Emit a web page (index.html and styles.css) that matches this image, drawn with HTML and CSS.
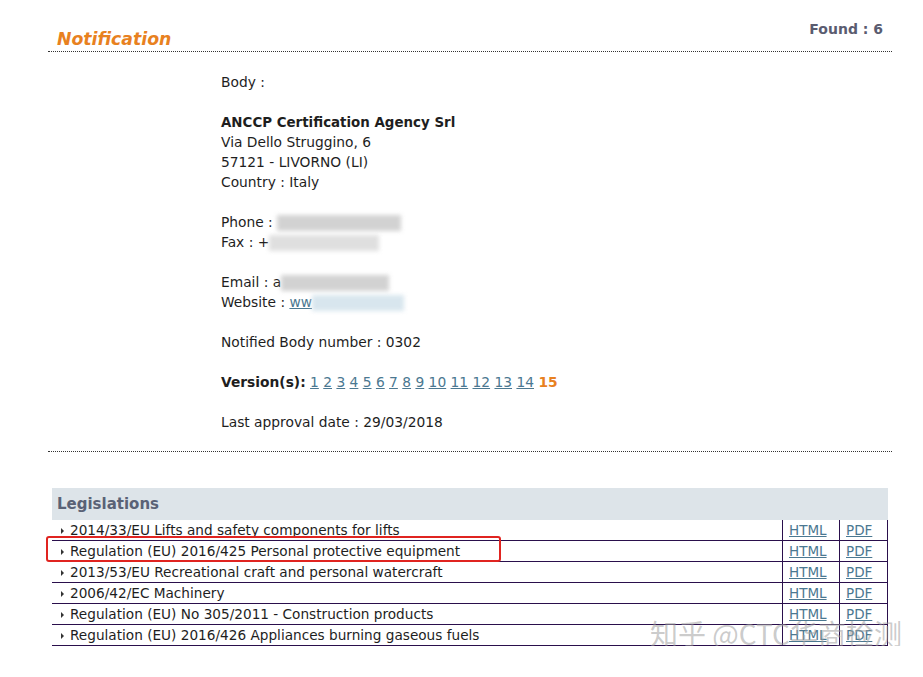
FILE: index.html
```html
<!DOCTYPE html>
<html>
<head>
<meta charset="utf-8">
<link rel="stylesheet" href="styles.css">
</head>
<body>
<div class="page">
  <div class="header">
    <h1 class="title">Notification</h1>
    <div class="found">Found : 6</div>
  </div>
  <div class="details">
    <div class="line">Body :</div>
    <div class="group">
      <div class="line"><b class="org">ANCCP Certification Agency Srl</b></div>
      <div class="line">Via Dello Struggino, 6</div>
      <div class="line">57121 - LIVORNO (LI)</div>
      <div class="line">Country : Italy</div>
    </div>
    <div class="group">
      <div class="line">Phone : <span class="blur w1"></span></div>
      <div class="line">Fax : +<span class="blur w2"></span></div>
    </div>
    <div class="group">
      <div class="line">Email : a<span class="blur w3"></span></div>
      <div class="line">Website : <a href="#">ww<span class="blur w4"></span></a></div>
    </div>
    <div class="group">
      <div class="line">Notified Body number : 0302</div>
    </div>
    <div class="group">
      <div class="line"><b>Version(s):</b> <a href="#">1</a> <a href="#">2</a> <a href="#">3</a> <a href="#">4</a> <a href="#">5</a> <a href="#">6</a> <a href="#">7</a> <a href="#">8</a> <a href="#">9</a> <a href="#">10</a> <a href="#">11</a> <a href="#">12</a> <a href="#">13</a> <a href="#">14</a> <b class="current">15</b></div>
    </div>
    <div class="group">
      <div class="line">Last approval date : 29/03/2018</div>
    </div>
  </div>
  <div class="legis">
    <div class="legis-head">Legislations</div>
    <table class="legis-table">
      <tr><td class="name"><span class="arrow"></span>2014/33/EU Lifts and safety components for lifts</td><td class="lnk"><a href="#">HTML</a></td><td class="lnk pdf"><a href="#">PDF</a></td></tr>
      <tr><td class="name"><span class="arrow"></span>Regulation (EU) 2016/425 Personal protective equipment</td><td class="lnk"><a href="#">HTML</a></td><td class="lnk pdf"><a href="#">PDF</a></td></tr>
      <tr><td class="name"><span class="arrow"></span>2013/53/EU Recreational craft and personal watercraft</td><td class="lnk"><a href="#">HTML</a></td><td class="lnk pdf"><a href="#">PDF</a></td></tr>
      <tr><td class="name"><span class="arrow"></span>2006/42/EC Machinery</td><td class="lnk"><a href="#">HTML</a></td><td class="lnk pdf"><a href="#">PDF</a></td></tr>
      <tr><td class="name"><span class="arrow"></span>Regulation (EU) No 305/2011 - Construction products</td><td class="lnk"><a href="#">HTML</a></td><td class="lnk pdf"><a href="#">PDF</a></td></tr>
      <tr><td class="name"><span class="arrow"></span>Regulation (EU) 2016/426 Appliances burning gaseous fuels</td><td class="lnk"><a href="#">HTML</a></td><td class="lnk pdf"><a href="#">PDF</a></td></tr>
    </table>
    <div class="highlight"></div>
    <div class="watermark">知乎 @CTC华商检测</div>
  </div>
</div>
</body>
</html>
```
FILE: styles.css
```css
html, body {
  margin: 0;
  padding: 0;
  background: #ffffff;
}
body {
  font-family: "DejaVu Sans", Verdana, sans-serif;
  font-size: 13px;
  color: #1e1e1e;
}
.page {
  padding: 0 31px 0 48px;
}
.header {
  display: flex;
  justify-content: space-between;
  align-items: flex-start;
  height: 51px;
  border-bottom: 1px dotted #333;
}
.title {
  margin: 28px 0 0 9px;
  font-size: 17.3px;
  font-weight: bold;
  font-style: italic;
  color: #e8811f;
  line-height: 22px;
}
.found {
  margin: 20px 9px 0 0;
  font-size: 14px;
  font-weight: bold;
  color: #5a5c70;
  line-height: 18px;
}
.details {
  padding: 20px 0 19px 173px;
  border-bottom: 1px dotted #333;
  font-size: 13.8px;
}
.org {
  font-size: 13.4px;
}
.line {
  line-height: 20px;
  height: 20px;
  white-space: nowrap;
}
.group {
  margin-top: 20px;
}
a {
  color: #4b7891;
  text-decoration: underline;
}
.current {
  color: #e8811f;
}
.blur {
  display: inline-block;
  vertical-align: middle;
  height: 16px;
  background: #c8c8c8;
  filter: blur(2px);
  opacity: 0.8;
}
.w1 { width: 124px; }
.w2 { width: 110px; background: #d8d8d8; }
.w3 { width: 108px; }
.w4 { width: 92px; background: #cfe0ea; }
.legis {
  position: relative;
  margin: 36px 4px 0 4px;
}
.legis-head {
  height: 32px;
  line-height: 32px;
  background: #dde4e9;
  padding-left: 5px;
  font-size: 15px;
  font-weight: bold;
  color: #5a6276;
}
.legis-table {
  width: 100%;
  border-collapse: collapse;
}
.legis-table td {
  height: 20px;
  padding: 0;
  line-height: 20px;
  border-bottom: 1px solid #2a0f4c;
  white-space: nowrap;
}
.legis-table td.name {
  padding-left: 9px;
  font-size: 13.65px;
}
.legis-table td.lnk {
  width: 50px;
  padding-left: 6px;
  border-left: 1px solid #2a0f4c;
  font-size: 13.5px;
}
.legis-table td.pdf {
  width: 41px;
  border-right: 1px solid #2a0f4c;
}
.arrow {
  display: inline-block;
  width: 0;
  height: 0;
  border-left: 3px solid #333;
  border-top: 3px solid transparent;
  border-bottom: 3px solid transparent;
  margin-right: 6px;
  vertical-align: middle;
}
.highlight {
  position: absolute;
  left: -6px;
  top: 48px;
  width: 451px;
  height: 22px;
  border: 2px solid #e02420;
  border-radius: 3px;
}
.watermark {
  position: absolute;
  left: 598px;
  top: 127px;
  font-family: "Noto Sans CJK SC", sans-serif;
  font-size: 28px;
  line-height: 36px;
  color: rgba(160, 160, 160, 0.55);
  white-space: nowrap;
}
```
